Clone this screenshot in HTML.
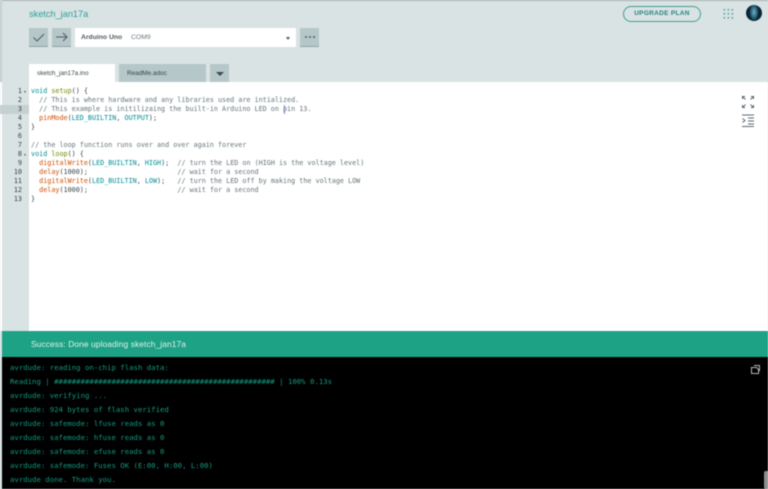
<!DOCTYPE html>
<html><head><meta charset="utf-8"><style>
html,body{margin:0;padding:0;width:768px;height:489px;overflow:hidden;background:#dae3e3}
#p{position:relative;width:768px;height:489px;overflow:hidden;filter:blur(.45px);font-family:"Liberation Sans",sans-serif}
.a{position:absolute}
.b{position:absolute;background:#b5c7c8;border-bottom:1px solid #8fa3a4;box-sizing:border-box}
pre{margin:0;font-family:"DejaVu Sans Mono","Liberation Mono",monospace}
#code{left:31px;top:87px;font-size:6.75px;line-height:9px;color:#37454b}
#nums{left:0;top:87px;width:22px;text-align:right;font-size:6.75px;line-height:9px;color:#37454b}
.k{color:#008f94}.f{color:#cf4f00}.g{color:#66767a}.t{color:#6f8a00}
#con{left:10px;top:361px;font-size:7.33px;line-height:14px;color:#129a7e}
</style></head><body><div id="p">
<div class="a" style="left:0;top:0;width:768px;height:1px;background:#a5b1b1"></div>
<div class="a" style="left:0;top:0;width:2px;height:331px;background:#c3cfcf"></div>
<div class="a" style="left:29px;top:9px;font-size:9.2px;color:#2f9e98">sketch_jan17a</div>

<div class="b" style="left:29px;top:28px;width:19px;height:19px"><svg width="19" height="18"><path d="M4.5 9.500l3.500 3.500 7-7" fill="none" stroke="#4e5b61" stroke-width="1"/></svg></div>
<div class="b" style="left:52px;top:28px;width:19px;height:19px"><svg width="19" height="18"><path d="M4 9h11M11 5l4 4-4 4" fill="none" stroke="#4e5b61" stroke-width="1"/></svg></div>
<div class="a" style="left:75px;top:28px;width:221px;height:19px;background:#fff"></div>
<div class="a" style="left:81px;top:33.500px;font-size:6.8px;font-weight:bold;color:#4e5b61">Arduino Uno</div>
<div class="a" style="left:131px;top:33.500px;font-size:6.8px;color:#6b7a80">COM9</div>
<div class="a" style="left:286px;top:36.500px;width:0;height:0;border-left:2.5px solid transparent;border-right:2.5px solid transparent;border-top:3px solid #4e5b61"></div>
<div class="b" style="left:300px;top:28px;width:19px;height:19px"><svg width="19" height="18"><path d="M5 9h2M9 9h2M13 9h2" stroke="#4e5b61" stroke-width="1.4"/></svg></div>

<div class="a" style="left:29px;top:64px;width:86px;height:19px;background:#fff"></div>
<div class="a" style="left:37px;top:69.500px;font-size:6.4px;color:#37454b">sketch_jan17a.ino</div>
<div class="a" style="left:119px;top:64px;width:87px;height:18px;background:#b5c7c8"></div>
<div class="a" style="left:127px;top:69.500px;font-size:6.4px;color:#37454b">ReadMe.adoc</div>
<div class="a" style="left:210px;top:64px;width:19px;height:18px;background:#b5c7c8"></div>
<div class="a" style="left:215.500px;top:72px;width:0;height:0;border-left:4px solid transparent;border-right:4px solid transparent;border-top:4px solid #3d4a50"></div>

<div class="a" style="left:623px;top:6px;width:78px;height:16px;box-sizing:border-box;border:1.3px solid #3f9f99;border-radius:8px;text-align:center;font-size:6.5px;line-height:13.500px;font-weight:bold;letter-spacing:.3px;color:#23827e">UPGRADE PLAN</div>
<svg class="a" style="left:723px;top:8px" width="11" height="11"><g fill="#4fa8a4"><rect x="0.500" y="1" width="1.6" height="1.6"/><rect x="4.500" y="1" width="1.6" height="1.6"/><rect x="8.500" y="1" width="1.6" height="1.6"/><rect x="0.500" y="5" width="1.6" height="1.6"/><rect x="4.500" y="5" width="1.6" height="1.6"/><rect x="8.500" y="5" width="1.6" height="1.6"/><rect x="0.500" y="9" width="1.6" height="1.6"/><rect x="4.500" y="9" width="1.6" height="1.6"/><rect x="8.500" y="9" width="1.6" height="1.6"/></g></svg>
<div class="a" style="left:746px;top:5px;width:16px;height:16px;border-radius:50%;background:radial-gradient(ellipse 30% 55% at 50% 45%,#7ba9bc 0,#2a6a82 60%,#0a2433 100%),#0a2433"></div>

<div class="a" style="left:0;top:82px;width:768px;height:249px;background:#fff"></div>
<div class="a" style="left:2px;top:82px;width:27px;height:249px;background:#dae3e3"></div>
<div class="a" style="left:0;top:105px;width:29px;height:9px;background:#c5d0d0"></div>
<pre class="a" id="nums">1
2
3
4
5
6
7
8
9
10
11
12
13</pre>
<div class="a" style="left:24px;top:90.500px;width:0;height:0;border-left:1.7px solid transparent;border-right:1.7px solid transparent;border-top:2.4px solid #4e5b61"></div>
<div class="a" style="left:24px;top:153.500px;width:0;height:0;border-left:1.7px solid transparent;border-right:1.7px solid transparent;border-top:2.4px solid #4e5b61"></div>
<pre class="a" id="code"><span class="k">void</span> <span class="t">setup</span>() {
  <span class="g">// This is where hardware and any libraries used are intialized.</span>
  <span class="g">// This example is initilizaing the built-in Arduino LED on pin 13.</span>
  <span class="f">pinMode</span>(<span class="k">LED_BUILTIN</span>, <span class="k">OUTPUT</span>);
}

<span class="g">// the loop function runs over and over again forever</span>
<span class="k">void</span> <span class="t">loop</span>() {
  <span class="f">digitalWrite</span>(<span class="k">LED_BUILTIN</span>, <span class="k">HIGH</span>);  <span class="g">// turn the LED on (HIGH is the voltage level)</span>
  <span class="f">delay</span>(1000);                      <span class="g">// wait for a second</span>
  <span class="f">digitalWrite</span>(<span class="k">LED_BUILTIN</span>, <span class="k">LOW</span>);   <span class="g">// turn the LED off by making the voltage LOW</span>
  <span class="f">delay</span>(1000);                      <span class="g">// wait for a second</span>
}</pre>
<div class="a" style="left:284px;top:105px;width:1px;height:9px;background:#7f8bd8"></div>

<svg class="a" style="left:742px;top:96px" width="12" height="12" fill="none" stroke="#5a6a70" stroke-width="1"><path d="M.5 3V.5H3M.5 .5l3 3M11.500 3V.5H9M11.500 .5l-3 3M.5 9v2.500H3M.5 11.500l3-3M11.500 9v2.500H9M11.500 11.500l-3-3"/></svg>
<svg class="a" style="left:742px;top:114px" width="12" height="13" fill="none" stroke="#5a6a70" stroke-width="1"><path d="M0 1h12M6 4h6M6 7h6M6 10h6M0 12.500h12M.5 4.500l2.500 2-2.500 2"/></svg>

<div class="a" style="left:2px;top:331px;width:766px;height:26px;background:#1da285"></div>
<div class="a" style="left:31px;top:338.500px;font-size:8.4px;letter-spacing:.1px;color:#e0f2ed">Success: Done uploading sketch_jan17a</div>
<div class="a" style="left:2px;top:357px;width:766px;height:132px;background:#000"></div>
<pre class="a" id="con">avrdude: reading on-chip flash data:
Reading | ################################################## | 100% 0.13s
avrdude: verifying ...
avrdude: 924 bytes of flash verified
avrdude: safemode: lfuse reads as 0
avrdude: safemode: hfuse reads as 0
avrdude: safemode: efuse reads as 0
avrdude: safemode: Fuses OK (E:00, H:00, L:00)
avrdude done. Thank you.</pre>
<svg class="a" style="left:751px;top:365px" width="9" height="9" fill="none" stroke="#b5b5b5" stroke-width="1"><path d="M3 .5h5.500v5.500M.5 2.500h5l2 2v4h-7z"/></svg>
<div class="a" style="left:764px;top:471px;width:4px;height:18px;background:#8a8f8f;border-radius:2px 0 0 2px"></div>
</div></body></html>
